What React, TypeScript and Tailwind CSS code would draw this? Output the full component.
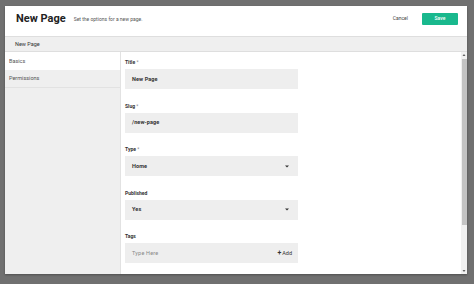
const font = { fontFamily: "Roboto, 'Noto Sans', sans-serif" };

function Field({ label, required, children }: { label: string; required?: boolean; children: React.ReactNode }) {
  return (
    <div className="mb-[13.5px]">
      <div className="h-[6px] leading-[6px] text-[5px] font-bold text-[#333] mb-[4px]">
        {label}
        {required && <span className="font-normal text-[#888]"> *</span>}
      </div>
      {children}
    </div>
  );
}

function Caret() {
  return (
    <svg width="4" height="3" viewBox="0 0 4 3" className="mr-[1px]">
      <path d="M0 0.5h4L2 2.6z" fill="#333" />
    </svg>
  );
}

export default function App() {
  return (
    <div className="w-[474px] h-[284px] bg-[#707070] pt-[6px] pl-[5px] overflow-hidden" style={font}>
      <div className="w-[462px] h-[268px] bg-white flex flex-col overflow-hidden shadow-[0_1px_2px_rgba(0,0,0,0.3)]">
        {/* header */}
        <div className="h-[30px] shrink-0 flex items-center pb-[4px] pl-[11px] pr-[9px]">
          <div className="text-[11px] leading-[12px] font-bold text-[#222]">New Page</div>
          <div className="ml-[8px] text-[5px] text-[#555] mt-[1px]">Set the options for a new page.</div>
          <div className="ml-auto text-[5px] text-[#444] mr-[14px]">Cancel</div>
          <button className="w-[36px] h-[12px] bg-[#19b88d] text-white text-[5px] font-medium rounded-[1px] flex items-center justify-center">
            Save
          </button>
        </div>

        {/* breadcrumb */}
        <div className="h-[16px] shrink-0 bg-[#efefef] border-y border-[#dedede] flex items-center pl-[10px] text-[5.5px] text-[#333]">
          New Page
        </div>

        {/* body */}
        <div className="flex-1 flex min-h-0">
          <div className="w-[116px] shrink-0 bg-[#efefef] border-r border-[#e2e2e2]">
            <div className="h-[18px] bg-white flex items-center pl-[4px] text-[5.5px] text-[#555]">Basics</div>
            <div className="h-[18px] flex items-center pl-[4px] text-[5.5px] text-[#555] border-b border-[#e2e2e2]">
              Permissions
            </div>
          </div>

          <div className="flex-1 bg-white pl-[4px] pt-[7px]">
            <div className="w-[173px]">
              <Field label="Title" required>
                <div className="h-[20px] bg-[#eeeeee] flex items-center pl-[7px] text-[5.5px] font-bold text-[#333] tracking-[0.1px]">
                  New Page
                </div>
              </Field>
              <Field label="Slug" required>
                <div className="h-[20px] bg-[#eeeeee] flex items-center pl-[7px] text-[5.5px] font-bold text-[#333] tracking-[0.1px]">
                  /new-page
                </div>
              </Field>
              <Field label="Type" required>
                <div className="h-[20px] bg-[#eeeeee] flex items-center justify-between pl-[7px] pr-[8px] text-[5.5px] font-bold text-[#333] tracking-[0.1px]">
                  Home
                  <Caret />
                </div>
              </Field>
              <Field label="Published">
                <div className="h-[20px] bg-[#eeeeee] flex items-center justify-between pl-[7px] pr-[8px] text-[5.5px] font-bold text-[#333] tracking-[0.1px]">
                  Yes
                  <Caret />
                </div>
              </Field>
              <Field label="Tags">
                <div className="h-[20px] bg-[#eeeeee] flex items-center justify-between pl-[7px] pr-[6px] text-[5.5px]">
                  <span className="text-[#888] tracking-[0.2px]">Type Here</span>
                  <span className="text-[#333] flex items-center">
                    <span className="font-bold text-[7px] leading-[6px] mr-[1px]">+</span>Add
                  </span>
                </div>
              </Field>
            </div>
          </div>

          {/* scrollbar */}
          <div className="w-[6px] shrink-0 bg-[#f1f1f1] flex flex-col items-center">
            <svg width="4" height="4" viewBox="0 0 4 4" className="mt-[1px]">
              <path d="M0.5 3L2 1l1.5 2z" fill="#606060" />
            </svg>
            <div className="w-[5px] h-[166px] bg-[#c4c4c4] mt-[2px]" />
            <div className="flex-1" />
            <svg width="4" height="4" viewBox="0 0 4 4" className="mb-[1px]">
              <path d="M0.5 1L2 3l1.5-2z" fill="#606060" />
            </svg>
          </div>
        </div>
      </div>
    </div>
  );
}
